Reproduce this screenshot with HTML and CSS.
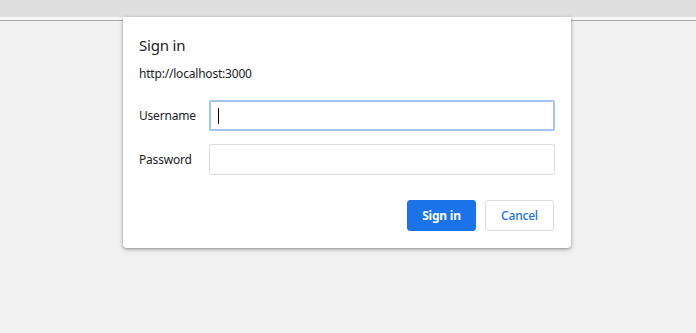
FILE: index.html
```html
<!DOCTYPE html>
<html lang="en">
<head>
    <meta charset="UTF-8">
    <title>Sign in</title>
    <link rel="stylesheet" href="styles.css">
</head>
<body>
    <div class="toolbar"></div>
    <div class="page"></div>

    <div class="dialog">
        <h1 class="title">Sign in</h1>
        <p class="origin">http://localhost:3000</p>
        <div class="fields">
            <label class="row">
                <span class="label">Username</span>
                <span class="input focused"><span class="caret"></span></span>
            </label>
            <label class="row">
                <span class="label">Password</span>
                <span class="input"></span>
            </label>
        </div>
        <div class="buttons">
            <button class="btn primary">Sign in</button>
            <button class="btn">Cancel</button>
        </div>
    </div>
</body>
</html>
```

FILE: styles.css
```css
body {
    margin: 0;
    height: 333px;
    background: #f1f1f1;
    font-family: "Noto Sans", "Open Sans", sans-serif;
    color: #202124;
    overflow: hidden;
}
.toolbar {
    height: 17px;
    background: #dfdfdf;
    border-bottom: 3px solid #f7f7f7;
}
.page {
    border-top: 1px solid #a9a9a9;
}
.dialog {
    position: absolute;
    left: 123px;
    top: 17px;
    width: 416px;
    padding: 16px 16px 17px;
    background: #fff;
    border-radius: 0 0 4px 4px;
    box-shadow: 0 1px 3px rgba(0, 0, 0, 0.35), 0 2px 6px rgba(0, 0, 0, 0.12);
    letter-spacing: -0.2px;
}
.title {
    margin: 1px 0 0;
    font-size: 15px;
    font-weight: normal;
    line-height: 22px;
}
.origin {
    margin: 9px 0 0;
    font-size: 12px;
    line-height: 17px;
}
.fields {
    display: flex;
    flex-direction: column;
    gap: 13px;
    margin-top: 18px;
}
.row {
    display: flex;
    align-items: center;
}
.label {
    width: 70px;
    font-size: 12px;
}
.input {
    box-sizing: border-box;
    width: 346px;
    height: 31px;
    border: 1px solid #dadce0;
    border-radius: 2px;
    display: flex;
    align-items: center;
    padding-left: 7px;
}
.input.focused {
    border: 2px solid #a3c4f3;
}
.caret {
    width: 1px;
    height: 16px;
    background: #000;
}
.buttons {
    display: flex;
    justify-content: flex-end;
    gap: 9px;
    margin-top: 25px;
    padding-right: 1px;
}
.btn {
    box-sizing: border-box;
    width: 69px;
    height: 31px;
    border: 1px solid #dadce0;
    border-radius: 3px;
    background: #fff;
    color: #1a73e8;
    font-family: inherit;
    font-size: 12px;
    font-weight: 500;
    letter-spacing: inherit;
}
.btn.primary {
    background: #1a73e8;
    border-color: #1a73e8;
    color: #fff;
    font-weight: bold;
}
```
